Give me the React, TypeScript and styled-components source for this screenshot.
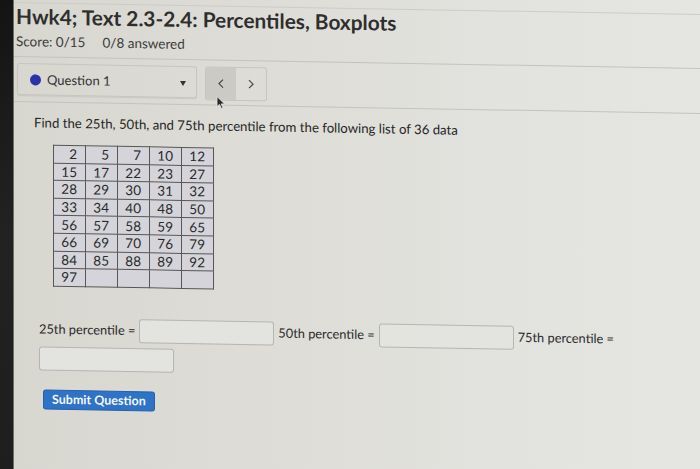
import React from "react";
import styled, { createGlobalStyle } from "styled-components";

const GlobalStyle = createGlobalStyle`
  html, body { margin: 0; padding: 0; background: #dcdbd5; }
  body { font-family: Lato, "Open Sans", sans-serif; }
`;

const Screen = styled.div`
  display: flex;
  width: 700px;
  height: 469px;
  overflow: hidden;
  background: linear-gradient(90deg, #d7d6cf 0%, #dddcd6 35%, #e2e2de 70%, #e5e5e2 100%);
`;

const Bezel = styled.div`
  flex: 0 0 13px;
  background: linear-gradient(180deg, #141414 0%, #222 50%, #1e1e1e 100%);
  border-right: 1px solid #6d6d6a;
`;

const Page = styled.div`
  flex: 1;
  display: flex;
  flex-direction: column;
  margin-top: 2px;
  border-top: 1px solid #cdccc7;
  transform: skewY(1deg);
  transform-origin: 0 0;
  color: #2b2b2b;
`;

const Header = styled.header`
  padding: 2px 0 7px 2px;
  border-bottom: 1px solid #c4c3be;
`;

const Title = styled.h1`
  margin: 0;
  font-size: 20.8px;
  line-height: 22px;
  font-weight: 700;
  color: #2e2e2e;
`;

const Score = styled.div`
  display: flex;
  gap: 17px;
  margin-top: 6px;
  font-size: 13.5px;
  line-height: 16px;
  color: #3c3c3c;
`;

const QuestionBar = styled.div`
  display: flex;
  align-items: flex-start;
  gap: 8px;
  padding: 6px 0 4px 3px;
  border-bottom: 1px solid #c4c3be;
`;

const Select = styled.div`
  width: 180px;
  height: 32px;
  box-sizing: border-box;
  display: flex;
  align-items: center;
  padding: 0 10px 0 12px;
  border: 1px solid #c6c5c0;
  border-radius: 3px;
  box-shadow: 0 1px 1px rgba(0, 0, 0, 0.08);
  font-size: 13px;
  color: #333;
`;

const Dot = styled.span`
  width: 11px;
  height: 11px;
  border-radius: 50%;
  background: #2c33a8;
  margin-right: 6px;
`;

const SelectLabel = styled.span`
  flex: 1;
`;

const Caret = styled.span`
  width: 0;
  height: 0;
  border-left: 3.5px solid transparent;
  border-right: 3.5px solid transparent;
  border-top: 5px solid #333;
  margin-top: 3px;
`;

const NavGroup = styled.div`
  position: relative;
  display: flex;
  height: 32px;
  border: 1px solid #c6c5c0;
  border-radius: 3px;
`;

const NavButton = styled.button<{ $pressed?: boolean }>`
  width: 30px;
  height: 100%;
  border: none;
  padding: 0;
  display: flex;
  align-items: center;
  justify-content: center;
  background: ${(p) => (p.$pressed ? "#cbcac5" : "transparent")};
  border-radius: ${(p) => (p.$pressed ? "3px 0 0 3px" : "0 3px 3px 0")};
`;

const Cursor = styled.svg`
  position: absolute;
  left: 10px;
  top: 28px;
`;

const Body = styled.main`
  display: flex;
  flex-direction: column;
  align-items: flex-start;
`;

const Prompt = styled.p`
  margin: 12px 0 0 20px;
  font-size: 13.2px;
  line-height: 16px;
  color: #262626;
`;

const DataTable = styled.table`
  margin: 14px 0 0 39px;
  border-collapse: collapse;
  font-size: 13.5px;
  color: #2a2a2a;
`;

const Cell = styled.td`
  width: 23px;
  height: 16.6px;
  padding: 0 8px 0 0;
  text-align: right;
  line-height: 16px;
  border: 1px solid #575757;
  background: #d4d4da;
`;

const Answers = styled.div`
  display: flex;
  flex-wrap: wrap;
  align-items: center;
  column-gap: 4px;
  row-gap: 3px;
  width: 620px;
  margin: 29px 0 0 25px;
`;

const AnswerLabel = styled.span`
  font-size: 12.8px;
  line-height: 16px;
  color: #2a2a2a;
`;

const AnswerInput = styled.input`
  width: 135px;
  height: 24px;
  box-sizing: border-box;
  border: 1px solid #b6b5b1;
  border-radius: 3px;
  background: #e3e3e0;
  margin-top: 2px;
`;

const Submit = styled.button`
  margin: 19px 0 0 29px;
  height: 20px;
  padding: 0 8px;
  border: 1px solid #2361ad;
  border-radius: 3px;
  background: #2f73c6;
  color: #f4f7fb;
  font-family: Lato, "Open Sans", sans-serif;
  font-size: 12.5px;
  font-weight: 700;
  line-height: 18px;
`;

const rows: (number | null)[][] = [
  [2, 5, 7, 10, 12],
  [15, 17, 22, 23, 27],
  [28, 29, 30, 31, 32],
  [33, 34, 40, 48, 50],
  [56, 57, 58, 59, 65],
  [66, 69, 70, 76, 79],
  [84, 85, 88, 89, 92],
  [97, null, null, null, null],
];

const Chevron = ({ dir }: { dir: "left" | "right" }) => (
  <svg width="8" height="10" viewBox="0 0 8 10">
    <polyline
      points={dir === "left" ? "6,1 2,5 6,9" : "2,1 6,5 2,9"}
      fill="none"
      stroke="#4a4a4a"
      strokeWidth="1.3"
    />
  </svg>
);

export default function App() {
  return (
    <Screen>
      <GlobalStyle />
      <Bezel />
      <Page>
        <Header>
          <Title>Hwk4; Text 2.3-2.4: Percentiles, Boxplots</Title>
          <Score>
            <span>Score: 0/15</span>
            <span>0/8 answered</span>
          </Score>
        </Header>
        <QuestionBar>
          <Select>
            <Dot />
            <SelectLabel>Question 1</SelectLabel>
            <Caret />
          </Select>
          <NavGroup>
            <NavButton $pressed aria-label="Previous question">
              <Chevron dir="left" />
            </NavButton>
            <NavButton aria-label="Next question">
              <Chevron dir="right" />
            </NavButton>
            <Cursor width="10" height="14" viewBox="0 0 10 14">
              <path d="M1 1 L1 11 L3.5 8.8 L5.5 13 L7 12.3 L5.2 8.3 L8.6 8.2 Z" fill="#2a2a2a" stroke="#e8e8e8" strokeWidth="0.8" />
            </Cursor>
          </NavGroup>
        </QuestionBar>
        <Body>
          <Prompt>Find the 25th, 50th, and 75th percentile from the following list of 36 data</Prompt>
          <DataTable>
            <tbody>
              {rows.map((r, i) => (
                <tr key={i}>
                  {r.map((v, j) => (
                    <Cell key={j}>{v ?? ""}</Cell>
                  ))}
                </tr>
              ))}
            </tbody>
          </DataTable>
          <Answers>
            <AnswerLabel>25th percentile =</AnswerLabel>
            <AnswerInput aria-label="25th percentile" />
            <AnswerLabel>50th percentile =</AnswerLabel>
            <AnswerInput aria-label="50th percentile" />
            <AnswerLabel>75th percentile =</AnswerLabel>
            <AnswerInput aria-label="75th percentile" />
          </Answers>
          <Submit>Submit Question</Submit>
        </Body>
      </Page>
    </Screen>
  );
}
